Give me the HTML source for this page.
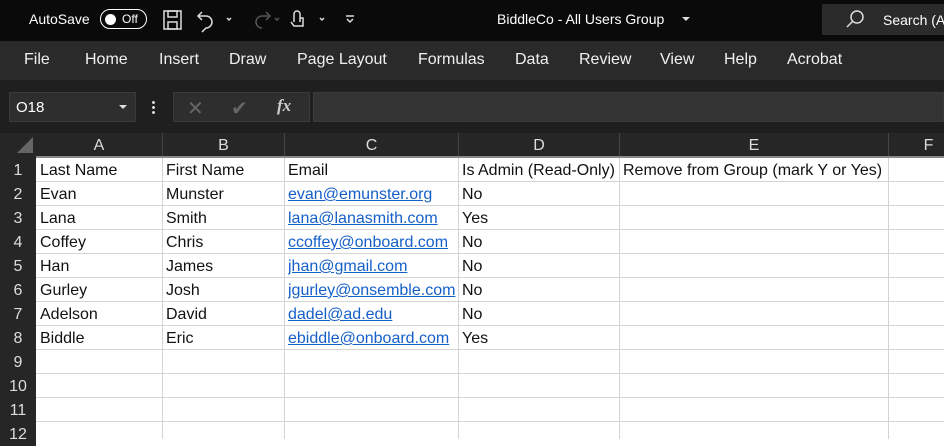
<!DOCTYPE html>
<html><head><meta charset="utf-8"><style>
*{margin:0;padding:0;box-sizing:border-box}
body{width:944px;height:439px;overflow:hidden;background:#fff;font-family:"Liberation Sans","DejaVu Sans",sans-serif;position:relative}
.abs{position:absolute}
.t{color:#fff;font-size:14px;white-space:nowrap}
.tab{position:absolute;top:51px;color:#f0f0f0;font-size:16px;white-space:nowrap}
.ch{position:absolute;top:133px;height:24px;background:#262626;color:#ddd;font-size:16px;text-align:center;line-height:25px;border-right:1px solid #444}
.rh{position:absolute;left:0;width:36px;background:#262626;color:#ddd;font-size:16px;text-align:center;line-height:26px;height:24px}
.c{position:absolute;font-size:16px;color:#111;white-space:nowrap;line-height:26px;overflow:hidden}
.l{color:#1560c8;text-decoration:underline}
</style></head><body>
<div class="abs" style="left:0;top:0;width:944px;height:41px;background:#0a0a0a"></div>
<div class="t abs" style="left:29px;top:11px">AutoSave</div>
<div class="abs" style="left:100px;top:9px;width:47px;height:20px;border:1.5px solid #fff;border-radius:10px"></div>
<div class="abs" style="left:105px;top:14px;width:11px;height:11px;border-radius:50%;background:#fff"></div>
<div class="t abs" style="left:122px;top:12px;font-size:12px">Off</div>
<svg class="abs" style="left:160px;top:8px" width="200" height="26" viewBox="0 0 200 26">
<g fill="none" stroke="#ddd" stroke-width="1.5">
<rect x="4" y="3" width="17" height="18"/><rect x="8" y="3" width="9" height="6"/><rect x="8" y="14" width="9" height="7"/>
<path d="M42 4 l-4 4 l4 4 M38 8 h8 a6 6 0 0 1 0 12 l-4 4"/>
<path d="M67 10 l2 2 l2-2"/>
<path d="M106 4 l4 4 l-4 4 M110 8 h-8 a6 6 0 0 0 0 12" stroke="#555"/>
<path d="M115 10 l2 2 l2-2" stroke="#555"/>
<path d="M134 14 v-8 a3 3 0 0 1 6 0 v8 M140 10 h3 v8 h-9 l-3-4" />
<path d="M160 10 l2 2 l2-2"/>
<path d="M186 8 h8 M187 11 l3 3 l3-3"/>
</g></svg>
<div class="t abs" style="left:497px;top:11px">BiddleCo - All Users Group</div>
<div class="abs" style="left:682px;top:17px;border-left:4px solid transparent;border-right:4px solid transparent;border-top:4px solid #ddd"></div>
<div class="abs" style="left:822px;top:4px;width:122px;height:31px;background:#2b2b2b"></div>
<svg class="abs" style="left:845px;top:9px" width="20" height="20"><circle cx="12" cy="8" r="6" fill="none" stroke="#ddd" stroke-width="1.5"/><path d="M8 12 L2 18" stroke="#ddd" stroke-width="1.5"/></svg>
<div class="t abs" style="left:883px;top:12px">Search (A</div>
<div class="abs" style="left:0;top:41px;width:944px;height:39px;background:#2a2a2a"></div>
<div class="tab" style="left:24px">File</div>
<div class="tab" style="left:85px">Home</div>
<div class="tab" style="left:159px">Insert</div>
<div class="tab" style="left:229px">Draw</div>
<div class="tab" style="left:297px">Page Layout</div>
<div class="tab" style="left:418px">Formulas</div>
<div class="tab" style="left:515px">Data</div>
<div class="tab" style="left:579px">Review</div>
<div class="tab" style="left:660px">View</div>
<div class="tab" style="left:724px">Help</div>
<div class="tab" style="left:787px">Acrobat</div>
<div class="abs" style="left:0;top:80px;width:944px;height:53px;background:#1f1f1f"></div>
<div class="abs" style="left:9px;top:92px;width:127px;height:30px;background:#2e2e2e;border:1px solid #3a3a3a"></div>
<div class="t abs" style="left:16px;top:99px;font-size:15px">O18</div>
<div class="abs" style="left:119px;top:105px;border-left:4px solid transparent;border-right:4px solid transparent;border-top:4px solid #ddd"></div>
<div class="abs" style="left:152px;top:100px;width:3px;height:14px;background:radial-gradient(circle,#ddd 1.3px,transparent 1.6px) 0 0/3px 5px"></div>
<div class="abs" style="left:173px;top:92px;width:137px;height:30px;background:#2e2e2e;border:1px solid #3a3a3a"></div>
<div class="abs" style="left:187px;top:96px;color:#666;font-size:20px">✕</div>
<div class="abs" style="left:231px;top:96px;color:#666;font-size:20px">✔</div>
<div class="abs" style="left:277px;top:96px;color:#ccc;font-size:17px;font-style:italic;font-family:'Liberation Serif',serif;font-weight:bold">fx</div>
<div class="abs" style="left:313px;top:92px;width:631px;height:30px;background:#333;border:1px solid #3a3a3a"></div>
<div class="abs" style="left:0;top:133px;width:36px;height:24px;background:#262626"></div>
<div class="abs" style="left:17px;top:137px;width:0;height:0;border-left:16px solid transparent;border-bottom:16px solid #666"></div>
<div class="ch" style="left:36px;width:127px">A</div>
<div class="ch" style="left:163px;width:122px">B</div>
<div class="ch" style="left:285px;width:174px">C</div>
<div class="ch" style="left:459px;width:161px">D</div>
<div class="ch" style="left:620px;width:269px">E</div>
<div class="ch" style="left:889px;width:80px">F</div>
<div class="abs" style="left:36px;top:156px;width:908px;height:2px;background:#888"></div>
<div class="abs" style="left:0;top:157px;width:36px;height:282px;background:#262626"></div>
<svg class="abs" style="left:36px;top:158px" width="908" height="281">
<g stroke="#d4d4d4" stroke-width="1">
<path d="M126.5 0V281M248.5 0V281M422.5 0V281M583.5 0V281M852.5 0V281"/>
<path d="M0 23.5H908M0 47.5H908M0 71.5H908M0 95.5H908M0 119.5H908M0 143.5H908M0 167.5H908M0 191.5H908M0 215.5H908M0 239.5H908M0 263.5H908"/>
</g></svg>
<div class="rh" style="top:158px">1</div>
<div class="rh" style="top:182px">2</div>
<div class="rh" style="top:206px">3</div>
<div class="rh" style="top:230px">4</div>
<div class="rh" style="top:254px">5</div>
<div class="rh" style="top:278px">6</div>
<div class="rh" style="top:302px">7</div>
<div class="rh" style="top:326px">8</div>
<div class="rh" style="top:350px">9</div>
<div class="rh" style="top:374px">10</div>
<div class="rh" style="top:398px">11</div>
<div class="rh" style="top:422px">12</div>
<div class="c" style="left:40px;top:158px">Last Name</div>
<div class="c" style="left:166px;top:158px">First Name</div>
<div class="c" style="left:288px;top:158px">Email</div>
<div class="c" style="left:462px;top:158px">Is Admin (Read-Only)</div>
<div class="c" style="left:623px;top:158px">Remove from Group (mark Y or Yes)</div>
<div class="c" style="left:40px;top:182px">Evan</div><div class="c" style="left:166px;top:182px">Munster</div><div class="c l" style="left:288px;top:182px;width:171px">evan@emunster.org</div><div class="c" style="left:462px;top:182px">No</div>
<div class="c" style="left:40px;top:206px">Lana</div><div class="c" style="left:166px;top:206px">Smith</div><div class="c l" style="left:288px;top:206px;width:171px">lana@lanasmith.com</div><div class="c" style="left:462px;top:206px">Yes</div>
<div class="c" style="left:40px;top:230px">Coffey</div><div class="c" style="left:166px;top:230px">Chris</div><div class="c l" style="left:288px;top:230px;width:171px">ccoffey@onboard.com</div><div class="c" style="left:462px;top:230px">No</div>
<div class="c" style="left:40px;top:254px">Han</div><div class="c" style="left:166px;top:254px">James</div><div class="c l" style="left:288px;top:254px;width:171px">jhan@gmail.com</div><div class="c" style="left:462px;top:254px">No</div>
<div class="c" style="left:40px;top:278px">Gurley</div><div class="c" style="left:166px;top:278px">Josh</div><div class="c l" style="left:288px;top:278px;width:171px">jgurley@onsemble.com</div><div class="c" style="left:462px;top:278px">No</div>
<div class="c" style="left:40px;top:302px">Adelson</div><div class="c" style="left:166px;top:302px">David</div><div class="c l" style="left:288px;top:302px;width:171px">dadel@ad.edu</div><div class="c" style="left:462px;top:302px">No</div>
<div class="c" style="left:40px;top:326px">Biddle</div><div class="c" style="left:166px;top:326px">Eric</div><div class="c l" style="left:288px;top:326px;width:171px">ebiddle@onboard.com</div><div class="c" style="left:462px;top:326px">Yes</div>
</body></html>
